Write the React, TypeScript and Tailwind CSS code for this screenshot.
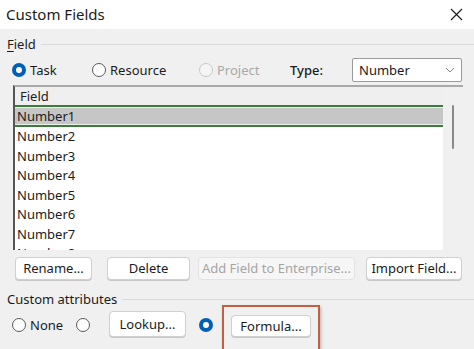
import { FunctionComponent } from "react";

const Radio: FunctionComponent<{ checked?: boolean; disabled?: boolean }> = ({
  checked = false,
  disabled = false,
}) => {
  if (checked) {
    return (
      <div className="w-[14px] h-[14px] rounded-full bg-[#005fb8] flex items-center justify-center shrink-0">
        <div className="w-[6px] h-[6px] rounded-full bg-white" />
      </div>
    );
  }
  return (
    <div
      className={`w-[14px] h-[14px] rounded-full border shrink-0 ${
        disabled ? "border-[#c8c8c8] bg-[#f5f5f5]" : "border-[#5a5a5a] bg-white"
      }`}
    />
  );
};

const Button: FunctionComponent<{
  label: string;
  className?: string;
  disabled?: boolean;
}> = ({ label, className = "", disabled = false }) => {
  return (
    <div
      className={`rounded-[4px] border flex items-center justify-center text-[13px] leading-none shrink-0 ${
        disabled
          ? "border-[#e3e3e3] bg-[#f6f6f6] text-[#a5a5a5]"
          : "border-[#d0d0d0] bg-white text-[#1b1b1b] shadow-[0_1px_0_#c8c8c8]"
      } ${className}`}
    >
      {label}
    </div>
  );
};

const rows = ["Number2", "Number3", "Number4", "Number5", "Number6", "Number7", "Number8"];

const App: FunctionComponent = () => {
  return (
    <div className="w-[474px] h-[349px] overflow-hidden bg-[#f0f0f0] text-[#1b1b1b] font-['Noto_Sans',sans-serif]">
      {/* title bar */}
      <div className="h-[29px] bg-white flex items-center justify-between pl-[6px] pr-[11px]">
        <span className="text-[15px] leading-none">Custom Fields</span>
        <svg width="13" height="13" viewBox="0 0 13 13" className="text-[#1b1b1b]">
          <path d="M1 1L12 12M12 1L1 12" stroke="currentColor" strokeWidth="1.1" fill="none" />
        </svg>
      </div>

      {/* Field group */}
      <div className="flex items-center pl-[7px] mt-[7px] h-[16px]">
        <span className="text-[13px] leading-none">
          <span className="underline underline-offset-2">F</span>ield
        </span>
        <div className="flex-1 h-px bg-[#dadada] ml-[5px]" />
      </div>

      <div className="flex items-center h-[26px] mt-[5px] text-[13px] leading-none">
        <div className="flex items-center gap-[4px] ml-[12px] w-[80px]">
          <Radio checked />
          <span>Task</span>
        </div>
        <div className="flex items-center gap-[4px] w-[107px]">
          <Radio />
          <span>Resource</span>
        </div>
        <div className="flex items-center gap-[4px] w-[91px] text-[#a8a8a8]">
          <Radio disabled />
          <span>Project</span>
        </div>
        <span className="w-[62px] font-medium">Type:</span>
        <div className="w-[110px] h-[24px] bg-white border border-[#9a9a9a] rounded-[2px] flex items-center justify-between pl-[6px] pr-[6px]">
          <span>Number</span>
          <svg width="10" height="6" viewBox="0 0 10 6">
            <path d="M1 1L5 5L9 1" stroke="#8a8a8a" strokeWidth="1" fill="none" />
          </svg>
        </div>
      </div>

      {/* list */}
      <div className="ml-[13px] mt-[2px] w-[450px] h-[165px] bg-white border-t-2 border-t-[#a9a9a9] border-l-2 border-l-[#555] flex overflow-hidden">
        <div className="flex-1 flex flex-col text-[13px] leading-none">
          <div className="h-[18px] bg-[#efefef] flex items-center pl-[5px] shrink-0">Field</div>
          <div className="h-[22px] bg-[#c6c6c6] border-y-2 border-[#3d7a3d] flex items-center pl-[2px] shrink-0 shadow-[inset_0_1px_0_#e8f0e8,inset_0_-1px_0_#e8f0e8]">
            Number1
          </div>
          {rows.map((r) => (
            <div key={r} className="h-[19.5px] flex items-center pl-[2px] shrink-0">
              {r}
            </div>
          ))}
        </div>
        <div className="w-[20px] bg-[#f0f0f0] flex justify-center pt-[18px]">
          <div className="w-[2px] h-[44px] bg-[#8a8a8a] rounded-full" />
        </div>
      </div>

      {/* buttons */}
      <div className="flex items-center mt-[7px] h-[23px]">
        <Button label="Rename..." className="ml-[15px] w-[77px] h-[23px]" />
        <Button label="Delete" className="ml-[15px] w-[83px] h-[23px]" />
        <Button label="Add Field to Enterprise..." className="ml-[8px] w-[157px] h-[23px]" disabled />
        <Button label="Import Field..." className="ml-[11px] w-[96px] h-[23px]" />
      </div>

      {/* Custom attributes */}
      <div className="flex items-center pl-[7px] mt-[11px] h-[16px]">
        <span className="text-[13px] leading-none">Custom attributes</span>
        <div className="flex-1 h-px bg-[#dadada] ml-[5px]" />
      </div>

      <div className="flex items-start mt-[-2px] text-[13px] leading-none">
        <div className="flex items-center gap-[4px] ml-[12px] mt-[13px] w-[64px]">
          <Radio />
          <span>None</span>
        </div>
        <div className="mt-[13px]">
          <Radio />
        </div>
        <Button label="Lookup..." className="ml-[19px] mt-[6px] w-[77px] h-[26px]" />
        <div className="ml-[13px] mt-[13px]">
          <Radio checked />
        </div>
        <div className="ml-[9px] w-[98px] h-[52px] border-2 border-[#c4603f] shadow-[1px_2px_3px_rgba(0,0,0,0.25)] pl-[7px] pt-[8px] shrink-0">
          <Button label="Formula..." className="w-[80px] h-[22px]" />
        </div>
      </div>
    </div>
  );
};

export default App;
